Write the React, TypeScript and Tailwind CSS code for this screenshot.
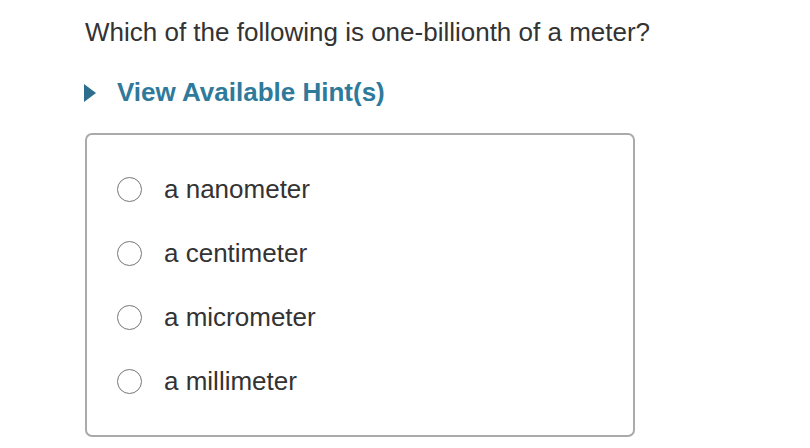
export default function App() {
  const options = ["a nanometer", "a centimeter", "a micrometer", "a millimeter"];
  return (
    <div className="w-[810px] h-[448px] bg-white overflow-hidden" style={{ fontFamily: '"Liberation Sans", Arial, sans-serif' }}>
      <div className="pl-[84px] pt-[17px]">
        <p className="ml-[1px] text-[26px] leading-[31px] text-[#333333]">Which of the following is one-billionth of a meter?</p>
        <div className="mt-[29px] flex items-center h-[31px]">
          <svg width="12" height="18" viewBox="0 0 12 18">
            <polygon points="0,0 12,9 0,18" fill="#2d6d8d" />
          </svg>
          <span className="ml-[21px] text-[26px] font-bold text-[#2f7a9b]">View Available Hint(s)</span>
        </div>
        <div className="ml-[1px] mt-[25px] w-[550px] h-[304px] border-2 border-[#aaaaaa] rounded-[7px] pt-[22px]">
          {options.map((o) => (
            <div key={o} className="h-[64px] flex items-center">
              <div className="ml-[30px] w-[25px] h-[25px] rounded-full border-[1.5px] border-[#777777]" />
              <span className="ml-[22px] text-[26px] text-[#333333]">{o}</span>
            </div>
          ))}
        </div>
      </div>
    </div>
  );
}
